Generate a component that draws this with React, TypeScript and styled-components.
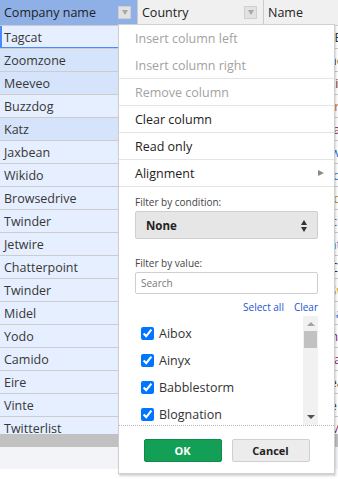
import React from "react";
import styled, { createGlobalStyle } from "styled-components";

const GlobalStyle = createGlobalStyle`
body {
    margin: 0;
    background: #ffffff;
    font-family: "Open Sans", "Noto Sans", sans-serif;
}
`;

const companies = [
    "Tagcat", "Zoomzone", "Meeveo", "Buzzdog", "Katz", "Jaxbean", "Wikido", "Browsedrive",
    "Twinder", "Jetwire", "Chatterpoint", "Twinder", "Midel", "Yodo", "Camido", "Eire", "Vinte", "Twitterlist",
];
const darkRows = [1, 2, 4];

// only the last few px of these peek out from under the menu
const names = [
    { text: "Jaquenette Bushell", color: "#333" },
    { text: "Virgie Brotherwood", color: "#333" },
    { text: "Martynne Kiddell Hal", color: "#7a2a12" },
    { text: "Lainey Steerson Mar", color: "#d2691e" },
    { text: "Maryjane Raithby Pur", color: "#8b1a6b" },
    { text: "Kristien Dilworth Blue", color: "#1e6fd9" },
    { text: "Brien Tweedlie Pebble", color: "#1e6fd9" },
    { text: "Loretta Bradnick Tan", color: "#b8860b" },
    { text: "Sherman Schoolcraft", color: "#1e6fd9" },
    { text: "Gusella Pentecost ..", color: "#1e6fd9" },
    { text: "Alexandra Cobbald xx", color: "#333" },
    { text: "Stephenie Swyer Yel", color: "#daa520" },
    { text: "Nickie Tidmarsh ...", color: "#1e6fd9" },
    { text: "Evelina Mangeon Pin", color: "#8b1a6b" },
    { text: "Ruthann Crathern Ros", color: "#8b1a6b" },
    { text: "Kristofor Reaveley =", color: "#333" },
    { text: "Cortie Sieve Dwell =", color: "#333" },
    { text: "Georgetta Madden Pur", color: "#8b1a6b" },
];

const filterValues = ["Aibox", "Ainyx", "Babblestorm", "Blognation"];

const Page = styled.div`
position: relative;
width: 338px;
height: 479px;
overflow: hidden;
font-size: 12.5px;
color: #333;
`;

const Viewport = styled.div`
height: 434px;
overflow: hidden;
`;

const Row = styled.div`
display: grid;
grid-template-columns: 138px 126px 140px;
`;

const HeaderCell = styled.div<{ $active?: boolean }>`
position: relative;
box-sizing: border-box;
height: 26px;
display: flex;
align-items: center;
padding: 0 4px;
background: ${p => p.$active ? "#8eb0e7" : "#f0f0f0"};
border-right: 1px solid #ccc;
border-bottom: 1px solid #ccc;
color: #222;
font-size: 12.5px;
white-space: nowrap;
`;

const DropButton = styled.span`
position: absolute;
right: 6px;
top: 6px;
box-sizing: border-box;
width: 13px;
height: 13px;
background: #e2e2e2;
border: 1px solid #cfcfcf;
display: flex;
align-items: center;
justify-content: center;

&::after {
    content: "";
    border-left: 3.5px solid transparent;
    border-right: 3.5px solid transparent;
    border-top: 5px solid #a8a8a8;
}
`;

const Cell = styled.div<{ $bg?: string; $current?: boolean; $color?: string }>`
position: relative;
box-sizing: border-box;
height: 23px;
display: flex;
align-items: center;
padding: 0 4px;
background: ${p => p.$bg || "#ffffff"};
border-right: 1px solid #ccc;
border-bottom: 1px solid #ccc;
color: ${p => p.$color || "#373737"};
font-size: 12.5px;
white-space: nowrap;
overflow: hidden;

${p => p.$current && `
&::after {
    content: "";
    position: absolute;
    top: -2px;
    left: 0;
    right: -1px;
    bottom: -1px;
    border: 2px solid #4b89ff;
}
`}
`;

const HScroll = styled.div`
height: 13px;
background: #c1c1c1;
`;

const Footer = styled.div`
height: 22px;
background: #f3f4f7;
`;

const Menu = styled.div`
position: absolute;
left: 118px;
top: 24px;
width: 217px;
box-sizing: border-box;
height: 450px;
background: #ffffff;
border: 1px solid #cfcfcf;
box-shadow: 1px 2px 2px rgba(0, 0, 0, 0.18);
display: flex;
flex-direction: column;

& > * {
    flex-shrink: 0;
}
`;

const MenuItem = styled.div<{ $disabled?: boolean; $divider?: boolean }>`
position: relative;
box-sizing: border-box;
height: 27px;
display: flex;
align-items: center;
padding: 0 16px;
font-size: 12.5px;
color: ${p => p.$disabled ? "#a2a2a2" : "#222"};
border-bottom: 1px solid ${p => p.$divider ? "#e4e4e4" : "transparent"};
`;

const SubArrow = styled.span`
position: absolute;
right: 10px;
top: 10px;
border-top: 3.5px solid transparent;
border-bottom: 3.5px solid transparent;
border-left: 6px solid #8a8a8a;
`;

const FilterSection = styled.div`
display: flex;
flex-direction: column;
padding: 8px 16px 0 16px;

& > * {
    flex-shrink: 0;
}
`;

const Label = styled.div`
font-size: 10px;
color: #444;
height: 14px;
line-height: 14px;
`;

const SelectBox = styled.div`
position: relative;
box-sizing: border-box;
height: 28px;
margin-top: 2px;
margin-bottom: 17px;
background: #e6e6e6;
border: 1px solid #cfcfcf;
border-radius: 2px;
display: flex;
align-items: center;
padding: 0 10px;
font-weight: 700;
font-size: 11.5px;
color: #222;
`;

const UpDown = styled.span`
position: absolute;
right: 10px;
top: 8px;
display: flex;
flex-direction: column;
gap: 2px;

&::before, &::after {
    content: "";
    border-left: 3px solid transparent;
    border-right: 3px solid transparent;
}
&::before {
    border-bottom: 5px solid #333;
}
&::after {
    border-top: 5px solid #333;
}
`;

const SearchInput = styled.div`
box-sizing: border-box;
height: 22px;
margin-top: 2px;
width: 183px;
border: 1px solid #cfcfcf;
border-radius: 2px;
display: flex;
align-items: center;
padding: 0 5px;
font-size: 10px;
color: #777;
`;

const Links = styled.div`
display: flex;
justify-content: flex-end;
gap: 10px;
margin-top: 6px;
height: 14px;
line-height: 14px;
font-size: 10px;
color: #1c52d8;
`;

const ValueList = styled.div`
display: flex;
height: 109px;
margin-top: 2px;
overflow: hidden;
`;

const Items = styled.div`
flex: 1;
display: flex;
flex-direction: column;
padding-top: 4px;
`;

const ValueItem = styled.label`
display: flex;
align-items: center;
height: 27px;
flex-shrink: 0;
gap: 5px;
padding-left: 6px;
font-size: 12.5px;
color: #333;

input {
    margin: 0;
    width: 13px;
    height: 13px;
    accent-color: #0075ff;
}
`;

const FakeScrollbar = styled.div`
width: 15px;
background: #f1f1f1;
display: flex;
flex-direction: column;
align-items: center;
padding-top: 6px;
box-sizing: border-box;
`;

const ScrollArrow = styled.span<{ $down?: boolean }>`
border-left: 4px solid transparent;
border-right: 4px solid transparent;
${p => p.$down ? "border-top: 4px solid #505050;" : "border-bottom: 4px solid #a3a3a3;"}
${p => p.$down && "margin-top: auto; margin-bottom: 6px;"}
`;

const Thumb = styled.span`
width: 13px;
height: 17px;
margin-top: 5px;
background: #c1c1c1;
`;

const Actions = styled.div`
border-top: 1px dotted #b8b8b8;
display: flex;
justify-content: center;
gap: 10px;
padding-top: 13px;
`;

const ActionButton = styled.div<{ $primary?: boolean }>`
box-sizing: border-box;
width: 78px;
height: 23px;
display: flex;
align-items: center;
justify-content: center;
border-radius: 2px;
font-weight: 700;
font-size: 11px;
background: ${p => p.$primary ? "#13a056" : "#ececec"};
color: ${p => p.$primary ? "#ffffff" : "#222"};
border: 1px solid ${p => p.$primary ? "#0e8a49" : "#cfcfcf"};
`;

const App = () => {
    return (
        <Page>
            <GlobalStyle />
            <Viewport>
                <Row>
                    <HeaderCell $active>Company name<DropButton /></HeaderCell>
                    <HeaderCell>Country<DropButton /></HeaderCell>
                    <HeaderCell>Name</HeaderCell>
                </Row>
                {companies.map((c, i) => (
                    <Row key={i}>
                        <Cell $bg={darkRows.includes(i) ? "#d6e4fb" : "#e6efff"} $current={i === 0}>{c}</Cell>
                        <Cell />
                        <Cell $color={names[i].color}>{names[i].text}</Cell>
                    </Row>
                ))}
            </Viewport>
            <HScroll />
            <Footer />

            <Menu>
                <MenuItem $disabled>Insert column left</MenuItem>
                <MenuItem $disabled $divider>Insert column right</MenuItem>
                <MenuItem $disabled $divider>Remove column</MenuItem>
                <MenuItem $divider>Clear column</MenuItem>
                <MenuItem $divider>Read only</MenuItem>
                <MenuItem $divider>Alignment<SubArrow /></MenuItem>
                <FilterSection>
                    <Label>Filter by condition:</Label>
                    <SelectBox>None<UpDown /></SelectBox>
                    <Label>Filter by value:</Label>
                    <SearchInput>Search</SearchInput>
                    <Links><span>Select all</span><span>Clear</span></Links>
                    <ValueList>
                        <Items>
                            {filterValues.map(v => (
                                <ValueItem key={v}>
                                    <input type="checkbox" defaultChecked />
                                    <span>{v}</span>
                                </ValueItem>
                            ))}
                        </Items>
                        <FakeScrollbar>
                            <ScrollArrow />
                            <Thumb />
                            <ScrollArrow $down />
                        </FakeScrollbar>
                    </ValueList>
                </FilterSection>
                <Actions>
                    <ActionButton $primary>OK</ActionButton>
                    <ActionButton>Cancel</ActionButton>
                </Actions>
            </Menu>
        </Page>
    );
};

export default App;
